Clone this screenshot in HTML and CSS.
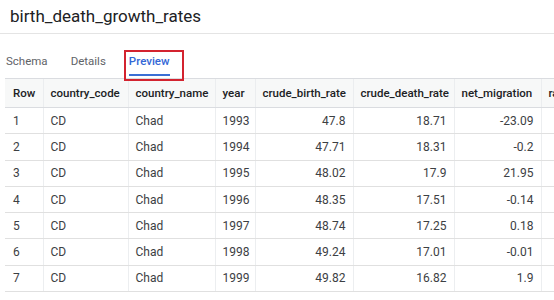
FILE: index.html
```html
<!DOCTYPE html>
<html>
<head>
<meta charset="utf-8">
<link rel="stylesheet" href="styles.css">
</head>
<body>
<div class="page">
  <div class="title-bar">
    <h1 class="title">birth_death_growth_rates</h1>
  </div>
  <div class="tabs">
    <div class="tab">Schema</div>
    <div class="tab">Details</div>
    <div class="tab active">Preview<span class="highlight"></span></div>
  </div>
  <div class="table-wrap">
    <table class="grid">
      <colgroup>
        <col class="c-row"><col class="c-code"><col class="c-name"><col class="c-year"><col class="c-birth"><col class="c-death"><col class="c-mig"><col class="c-next">
      </colgroup>
      <thead>
        <tr>
          <th>Row</th><th>country_code</th><th>country_name</th><th>year</th><th>crude_birth_rate</th><th>crude_death_rate</th><th>net_migration</th><th>rate_natural_increase</th>
        </tr>
      </thead>
      <tbody>
        <tr><td>1</td><td>CD</td><td>Chad</td><td>1993</td><td class="num">47.8</td><td class="num">18.71</td><td class="num">-23.09</td><td class="num">2.9</td></tr>
        <tr><td>2</td><td>CD</td><td>Chad</td><td>1994</td><td class="num">47.71</td><td class="num">18.31</td><td class="num">-0.2</td><td class="num">2.94</td></tr>
        <tr><td>3</td><td>CD</td><td>Chad</td><td>1995</td><td class="num">48.02</td><td class="num">17.9</td><td class="num">21.95</td><td class="num">3.01</td></tr>
        <tr><td>4</td><td>CD</td><td>Chad</td><td>1996</td><td class="num">48.35</td><td class="num">17.51</td><td class="num">-0.14</td><td class="num">3.08</td></tr>
        <tr><td>5</td><td>CD</td><td>Chad</td><td>1997</td><td class="num">48.74</td><td class="num">17.25</td><td class="num">0.18</td><td class="num">3.15</td></tr>
        <tr><td>6</td><td>CD</td><td>Chad</td><td>1998</td><td class="num">49.24</td><td class="num">17.01</td><td class="num">-0.01</td><td class="num">3.22</td></tr>
        <tr><td>7</td><td>CD</td><td>Chad</td><td>1999</td><td class="num">49.82</td><td class="num">16.82</td><td class="num">1.9</td><td class="num">3.3</td></tr>
      </tbody>
    </table>
  </div>
</div>
</body>
</html>
```
FILE: styles.css
```css
html, body {
  margin: 0;
  padding: 0;
  background: #ffffff;
}
.page {
  width: 554px;
  height: 300px;
  overflow: hidden;
  font-family: Roboto, "Liberation Sans", Arial, sans-serif;
  color: #3c4043;
}
.title-bar {
  height: 33px;
  border-bottom: 1px solid #e4e4e4;
  display: flex;
  align-items: center;
  padding-left: 10px;
}
.title {
  margin: 0;
  font-size: 17px;
  font-weight: 400;
  color: #202124;
  line-height: 20px;
  position: relative;
  top: -1px;
}
.tabs {
  height: 44px;
  display: flex;
  align-items: flex-start;
  gap: 23px;
  padding-left: 6px;
  padding-top: 20px;
  box-sizing: border-box;
  font-size: 11.5px;
  color: #5f6368;
}
.tab {
  position: relative;
  line-height: 14px;
}
.tab.active {
  color: #3367d6;
  font-weight: 500;
}
.tab.active::after {
  content: "";
  position: absolute;
  left: 0;
  right: 0;
  bottom: -8px;
  height: 2px;
  background: #3b6fd4;
}
.highlight {
  position: absolute;
  left: -5px;
  right: -14px;
  top: -4px;
  bottom: -13px;
  border: 2px solid #d3232f;
  pointer-events: none;
  z-index: 2;
}
.table-wrap {
  padding-left: 5px;
  overflow: hidden;
}
.grid {
  border-collapse: collapse;
  table-layout: fixed;
  width: 600px;
  font-size: 12px;
}
.c-row { width: 38px; }
.c-code { width: 85px; }
.c-name { width: 87px; }
.c-year { width: 40px; }
.c-birth { width: 98px; }
.c-death { width: 101px; }
.c-mig { width: 87px; }
.c-next { width: 64px; }
.grid th {
  height: 28px;
  background: #f7f8f8;
  border-top: 1px solid #dadce0;
  border-bottom: 1px solid #dadce0;
  border-left: 1px solid #ebedef;
  text-align: left;
  font-weight: 500;
  font-size: 11.5px;
  color: #202124;
  padding: 0 7px;
  white-space: nowrap;
  overflow: hidden;
}
.grid td {
  height: 25.3px;
  border-bottom: 1px solid #e0e0e0;
  border-left: 1px solid #eceef0;
  padding: 0 7px;
  white-space: nowrap;
  overflow: hidden;
  color: #3c4043;
}
.grid th:first-child, .grid td:first-child {
  border-left: none;
  padding-left: 8px;
}
.grid td.num {
  text-align: right;
}
```
